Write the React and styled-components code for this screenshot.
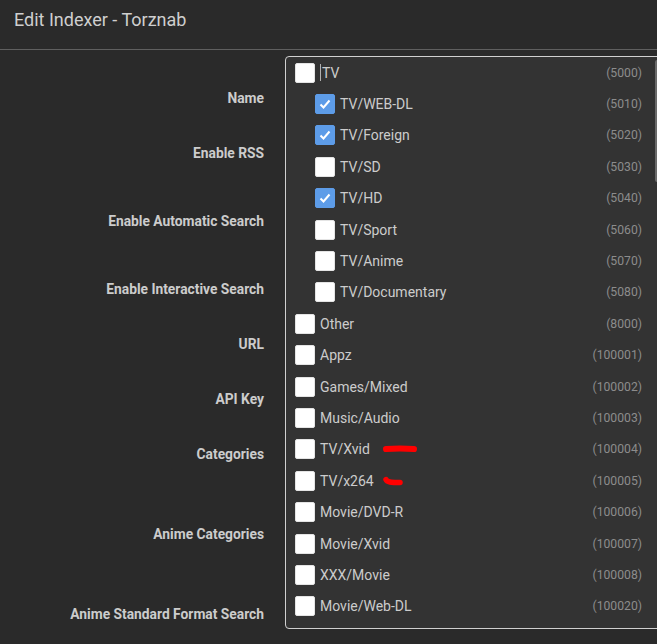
import React from 'react';
import styled, { createGlobalStyle } from 'styled-components';

const Global = createGlobalStyle`
  html, body {
    margin: 0;
    background: #2a2a2a;
    font-family: Roboto, "Liberation Sans", sans-serif;
  }
`;

const Page = styled.div`
  position: relative;
  width: 657px;
  height: 644px;
  overflow: hidden;
  background: #2a2a2a;
`;

const Header = styled.div`
  height: 50px;
  box-sizing: border-box;
  border-bottom: 1px solid #5f5f5f;
  padding: 9px 14px 0;
  color: #cfcfcf;
  font-size: 18px;
`;

const Form = styled.div`
  display: flex;
  flex-direction: column;
  padding-top: 38px;
`;

const FormRow = styled.div`
  display: flex;
  align-items: center;
  height: 20px;
  margin-top: ${p => p.gap}px;
`;

const Label = styled.div`
  width: 264px;
  text-align: right;
  color: #cccccc;
  font-size: 13.8px;
  font-weight: bold;
`;

const Menu = styled.div`
  position: absolute;
  left: 285px;
  top: 56px;
  width: 380px;
  height: 573px;
  box-sizing: border-box;
  border: 1px solid #d0d0d0;
  border-radius: 4px;
  background: #333333;
  overflow: hidden;
`;

const Thumb = styled.div`
  position: absolute;
  top: 3px;
  left: 369px;
  width: 4px;
  height: 122px;
  border-radius: 2px;
  background: #6a6a6a;
`;

const Item = styled.div`
  display: flex;
  align-items: center;
  height: 31.4px;
  padding: 0 22px 0 ${p => (p.child ? 29 : 9)}px;
`;

const Box = styled.span`
  flex: none;
  display: flex;
  align-items: center;
  justify-content: center;
  width: 20px;
  height: 20px;
  box-sizing: border-box;
  border-radius: 2px;
  background: ${p => (p.checked ? '#5d9ce8' : '#ffffff')};
  border: 1px solid ${p => (p.checked ? '#5d9ce8' : '#e4e4e4')};
`;

const Name = styled.span`
  display: flex;
  align-items: center;
  margin-left: 5px;
  color: #cccccc;
  font-size: 14px;
  flex: 1;
`;

const Caret = styled.span`
  display: inline-block;
  width: 1px;
  height: 17px;
  background: #b0b0b0;
  margin-right: 1px;
`;

const Count = styled.span`
  color: #8c8c8c;
  font-size: 12.2px;
`;

const Mark = styled.svg`
  margin-left: ${p => p.gap}px;
`;

const labels = [
  ['Name', 0],
  ['Enable RSS', 35],
  ['Enable Automatic Search', 48],
  ['Enable Interactive Search', 48],
  ['URL', 35],
  ['API Key', 35],
  ['Categories', 35],
  ['Anime Categories', 60],
  ['Anime Standard Format Search', 60]
];

const items = [
  { name: 'TV', id: 5000, caret: true },
  { name: 'TV/WEB-DL', id: 5010, child: true, checked: true },
  { name: 'TV/Foreign', id: 5020, child: true, checked: true },
  { name: 'TV/SD', id: 5030, child: true },
  { name: 'TV/HD', id: 5040, child: true, checked: true },
  { name: 'TV/Sport', id: 5060, child: true },
  { name: 'TV/Anime', id: 5070, child: true },
  { name: 'TV/Documentary', id: 5080, child: true },
  { name: 'Other', id: 8000 },
  { name: 'Appz', id: 100001 },
  { name: 'Games/Mixed', id: 100002 },
  { name: 'Music/Audio', id: 100003 },
  { name: 'TV/Xvid', id: 100004, mark: 'long' },
  { name: 'TV/x264', id: 100005, mark: 'short' },
  { name: 'Movie/DVD-R', id: 100006 },
  { name: 'Movie/Xvid', id: 100007 },
  { name: 'XXX/Movie', id: 100008 },
  { name: 'Movie/Web-DL', id: 100020 },
  { name: '', id: '' }
];

const Check = () => (
  <svg width="14" height="14" viewBox="0 0 14 14">
    <polyline points="2.5,7.5 5.5,10.5 11.5,3.5" fill="none" stroke="#fff" strokeWidth="2" />
  </svg>
);

const RedMark = ({ kind }) =>
  kind === 'long' ? (
    <Mark gap={13} width="34" height="8" viewBox="0 0 34 8">
      <path d="M3 4 C12 3.5 22 3.5 31 4" stroke="#ff0000" strokeWidth="6" strokeLinecap="round" fill="none" />
    </Mark>
  ) : (
    <Mark gap={9} width="20" height="10" viewBox="0 0 20 10">
      <path d="M3 3.5 C4 6 8 6.5 17 6.5" stroke="#ff0000" strokeWidth="5.5" strokeLinecap="round" fill="none" />
    </Mark>
  );

export default function App() {
  return (
    <Page>
      <Global />
      <Header>Edit Indexer - Torznab</Header>
      <Form>
        {labels.map(([text, gap]) => (
          <FormRow key={text} gap={gap}>
            <Label>{text}</Label>
          </FormRow>
        ))}
      </Form>
      <Menu>
        {items.map((it, i) => (
          <Item key={i} child={it.child}>
            <Box checked={it.checked}>{it.checked && <Check />}</Box>
            <Name>
              {it.caret && <Caret />}
              {it.name}
              {it.mark && <RedMark kind={it.mark} />}
            </Name>
            {it.id !== '' && <Count>({it.id})</Count>}
          </Item>
        ))}
        <Thumb />
      </Menu>
    </Page>
  );
}
